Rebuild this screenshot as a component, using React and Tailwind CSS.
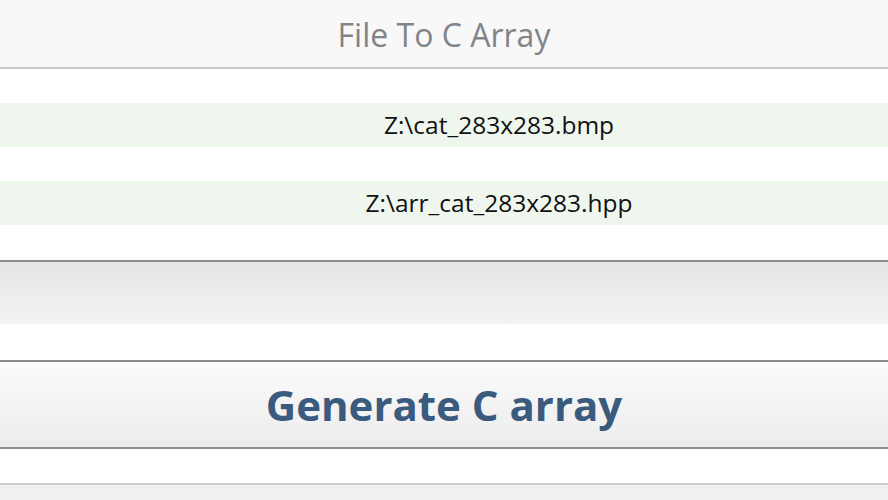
export default function App() {
  const font = { fontFamily: '"Segoe UI", "Open Sans", "Noto Sans", sans-serif' };
  return (
    <div className="h-[500px] w-full overflow-hidden bg-white flex flex-col" style={font}>
      <header className="h-[69px] shrink-0 bg-[#f8f8f8] border-b-2 border-[#c9c9c9] flex items-center justify-center">
        <h1 className="text-[32px] leading-none text-[#818489] pt-[2px]">File To C Array</h1>
      </header>
      <div className="mt-[34px] h-[44px] bg-[#eff6ee] flex items-center justify-center pl-[110px]">
        <span className="text-[24.5px] leading-none text-[#111]">Z:\cat_283x283.bmp</span>
      </div>
      <div className="mt-[34px] h-[44px] bg-[#eff6ee] flex items-center justify-center pl-[110px]">
        <span className="text-[24.5px] leading-none text-[#111]">Z:\arr_cat_283x283.hpp</span>
      </div>
      <div className="mt-[35px] h-[64px] shrink-0 border-t-2 border-[#8c8c8c] bg-gradient-to-b from-[#e5e5e5] to-[#f3f3f3]" />
      <button className="mt-[36px] h-[89px] shrink-0 border-y-2 border-[#8c8c8c] bg-gradient-to-b from-[#fbfbfb] to-[#ececec] flex items-center justify-center">
        <span className="text-[42px] leading-none font-bold text-[#3a5a7e]">Generate C array</span>
      </button>
      <div className="mt-[34px] flex-1 border-t-2 border-[#cdcdcd] bg-[#f1f1f1]" />
    </div>
  );
}
